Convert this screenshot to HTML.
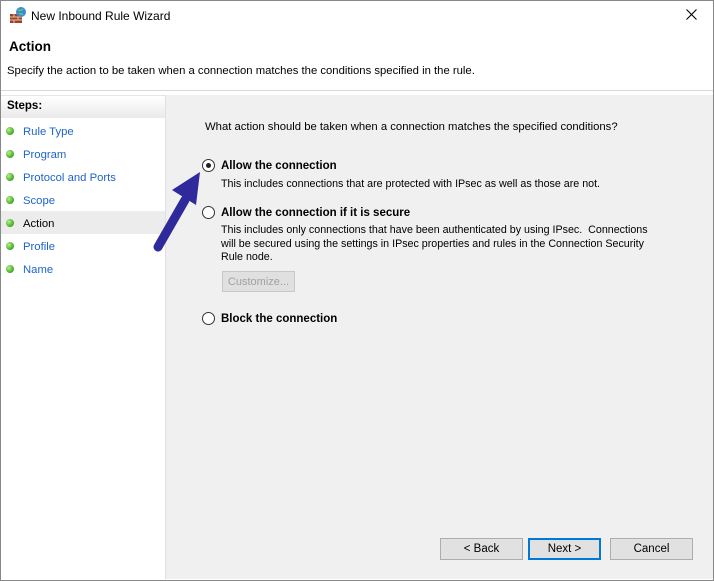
<!DOCTYPE html>
<html><head><style>
body{margin:0;width:714px;height:581px;overflow:hidden;background:#fff;font-family:"Liberation Sans",sans-serif;font-size:11.3px;color:#000;position:relative}
.a{position:absolute;white-space:nowrap}
.win{position:absolute;left:0;top:0;width:712px;height:579px;border:1px solid #888}
.step{position:absolute;left:0;width:165px;height:22px;line-height:22px}
.step i{position:absolute;left:6px;top:7px;width:8px;height:8px;border-radius:50%;background:radial-gradient(circle at 35% 35%,#b5f08a,#3ea823 70%)}
.step span{position:absolute;left:23px;top:1px;color:#1e64c8}
.rad{position:absolute;width:11px;height:11px;border:1px solid #333;border-radius:50%;background:#fff}
.btn{position:absolute;top:538px;width:81px;height:20px;border:1px solid #adadad;background:#e1e1e1;text-align:center;line-height:21px;font-size:11.5px}
</style></head><body>
<div class="win"></div>
<svg class="a" style="left:9px;top:6px" width="18" height="18" viewBox="0 0 18 18"><rect x="1" y="8" width="12" height="9" fill="#a0402a"/><path d="M1 11h12M1 14h12M5 8v3M9 11v3M5 14v3" stroke="#e8c0a0" stroke-width="1"/><circle cx="12" cy="6" r="5" fill="#3a8ad8"/><path d="M9 4q3 1 5-1M10 8q2-1 4 1" stroke="#6c6" stroke-width="1.5" fill="none"/></svg>
<div class="a" style="left:31px;top:9px;font-size:12px">New Inbound Rule Wizard</div>
<svg class="a" style="left:686px;top:9px" width="11" height="11"><path d="M0.5 0.5L10.5 10.5M10.5 0.5L0.5 10.5" stroke="#000" stroke-width="1.1"/></svg>
<div class="a" style="left:9px;top:39px;font-size:13.5px;font-weight:bold">Action</div>
<div class="a" style="left:7px;top:65px">Specify the action to be taken when a connection matches the conditions specified in the rule.</div>
<div class="a" style="left:1px;top:90px;width:712px;height:1px;background:#d8d8d8"></div>
<div class="a" style="left:166px;top:95px;width:547px;height:484px;background:#f0f0f0"></div>
<div class="a" style="left:165px;top:95px;width:1px;height:484px;background:#e0e0e0"></div>
<div class="a" style="left:1px;top:95px;width:164px;height:22px;background:linear-gradient(#fff,#eaeaea);border-top:1px solid #e6e6e6"></div>
<div class="a" style="left:7px;top:100px;font-weight:bold;font-size:11.5px">Steps:</div>
<div class="a" style="left:1px;top:211px;width:164px;height:23px;background:#ececec"></div>
<div class="step" style="top:120px"><i></i><span>Rule Type</span></div>
<div class="step" style="top:143px"><i></i><span>Program</span></div>
<div class="step" style="top:166px"><i></i><span>Protocol and Ports</span></div>
<div class="step" style="top:189px"><i></i><span>Scope</span></div>
<div class="step" style="top:212px"><i></i><span style="color:#000">Action</span></div>
<div class="step" style="top:235px"><i></i><span>Profile</span></div>
<div class="step" style="top:258px"><i></i><span>Name</span></div>
<div class="a" style="left:205px;top:121px">What action should be taken when a connection matches the specified conditions?</div>
<div class="rad" style="left:202px;top:159px"><div style="position:absolute;left:3px;top:3px;width:5px;height:5px;border-radius:50%;background:#222"></div></div>
<div class="a" style="left:221px;top:160px;font-weight:bold;font-size:11.5px">Allow the connection</div>
<div class="a" style="left:221px;top:178px;font-size:10.7px">This includes connections that are protected with IPsec as well as those are not.</div>
<div class="rad" style="left:202px;top:206px"></div>
<div class="a" style="left:221px;top:207px;font-weight:bold;font-size:11.5px">Allow the connection if it is secure</div>
<div class="a" style="left:221px;top:224px;font-size:10.7px;line-height:13.5px">This includes only connections that have been authenticated by using IPsec.&nbsp; Connections<br>will be secured using the settings in IPsec properties and rules in the Connection Security<br>Rule node.</div>
<div class="a" style="left:222px;top:271px;width:71px;height:19px;border:1px solid #c8c8c8;background:#e0e0e0;color:#a0a0a0;text-align:center;line-height:20px;font-size:11px">Customize...</div>
<div class="rad" style="left:202px;top:312px"></div>
<div class="a" style="left:221px;top:313px;font-weight:bold;font-size:11.5px">Block the connection</div>
<svg class="a" style="left:150px;top:165px" width="60" height="95" viewBox="0 0 60 95"><path d="M8 82L35 35" stroke="#2e2a9c" stroke-width="9" stroke-linecap="round"/><path d="M50 7L22 25L46 40Z" fill="#2e2a9c"/></svg>
<div class="btn" style="left:440px">&lt; Back</div>
<div class="btn" style="left:528px;border:2px solid #0078d7;width:69px;height:18px;line-height:19px">Next &gt;</div>
<div class="btn" style="left:610px">Cancel</div>
</body></html>
